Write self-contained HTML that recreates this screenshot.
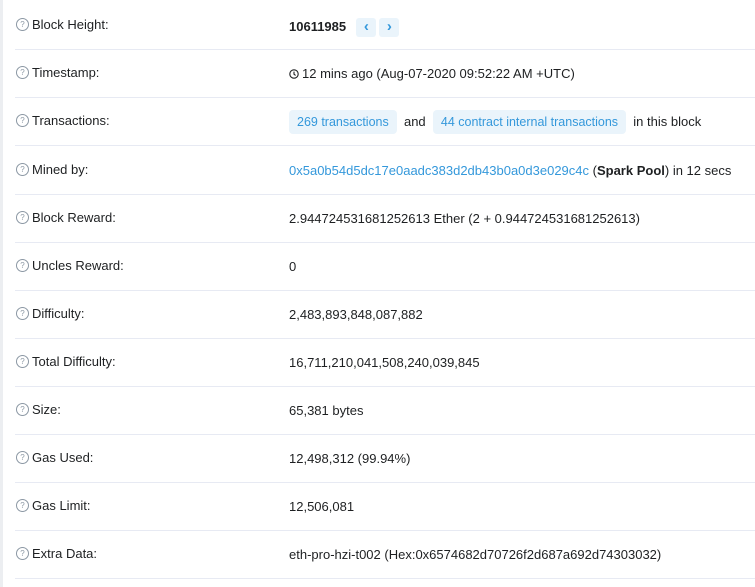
<!DOCTYPE html>
<html><head><style>
body{margin:0;width:755px;height:587px;background:#fff;font-family:"Liberation Sans",Arial,sans-serif;font-size:13px;color:#1e2022;position:relative;overflow:hidden}
.lb{position:absolute;left:0;top:0;width:3px;height:587px;background:#eceef1}
.row{position:absolute;left:15px;right:0;height:48px;border-bottom:1px solid #e7eaf3}
.l{position:absolute;left:0;top:16px;line-height:16px;color:#1e2022}
.q{position:absolute;left:1px;top:17px;width:11px;height:11px;border:1px solid #8c98a4;border-radius:50%;font-size:8px;line-height:11px;text-align:center;color:#8c98a4}
.l span.t{margin-left:17px}
.v{position:absolute;left:274px;top:16px;line-height:16px;white-space:nowrap}
a{color:#3498db;text-decoration:none}
.b{background:#eaf4fb;color:#3498db;padding:5px 8px;border-radius:4px;font-size:12.5px}
.n{display:inline-block;width:20px;height:19px;background:#eaf4fb;color:#3498db;border-radius:3px;text-align:center;line-height:18px;font-size:15px;font-weight:bold;margin-left:3px}
</style></head><body>
<div class="lb"></div>
<div class="row" style="top:1px"><span class="q">?</span><span class="l"><span class="t">Block Height:</span></span><span class="v" style="top:17px"><b>10611985</b> &nbsp;<span class="n">&#8249;</span><span class="n">&#8250;</span></span></div>
<div class="row" style="top:49px"><span class="q">?</span><span class="l"><span class="t">Timestamp:</span></span><span class="v" style="top:17px"><svg width="10" height="10" viewBox="0 0 10 10" style="vertical-align:-1px;margin-right:3px"><circle cx="5" cy="5" r="4.2" fill="none" stroke="#1e2022" stroke-width="1.1"/><path d="M5 2.6V5.2L6.6 6.4" fill="none" stroke="#1e2022" stroke-width="1.1"/></svg>12 mins ago (Aug-07-2020 09:52:22 AM +UTC)</span></div>
<div class="row" style="top:97px"><span class="q">?</span><span class="l"><span class="t">Transactions:</span></span><span class="v" style="top:17px"><span class="b">269 transactions</span> &nbsp;and &nbsp;<span class="b">44 contract internal transactions</span>&nbsp; in this block</span></div>
<div class="row" style="top:146px"><span class="q">?</span><span class="l"><span class="t">Mined by:</span></span><span class="v" style="top:17px"><a>0x5a0b54d5dc17e0aadc383d2db43b0a0d3e029c4c</a> (<b>Spark Pool</b>) in 12 secs</span></div>
<div class="row" style="top:194px"><span class="q">?</span><span class="l"><span class="t">Block Reward:</span></span><span class="v" style="top:17px">2.944724531681252613 Ether (2 + 0.944724531681252613)</span></div>
<div class="row" style="top:242px"><span class="q">?</span><span class="l"><span class="t">Uncles Reward:</span></span><span class="v" style="top:17px">0</span></div>
<div class="row" style="top:290px"><span class="q">?</span><span class="l"><span class="t">Difficulty:</span></span><span class="v" style="top:17px">2,483,893,848,087,882</span></div>
<div class="row" style="top:338px"><span class="q">?</span><span class="l"><span class="t">Total Difficulty:</span></span><span class="v" style="top:17px">16,711,210,041,508,240,039,845</span></div>
<div class="row" style="top:386px"><span class="q">?</span><span class="l"><span class="t">Size:</span></span><span class="v" style="top:17px">65,381 bytes</span></div>
<div class="row" style="top:434px"><span class="q">?</span><span class="l"><span class="t">Gas Used:</span></span><span class="v" style="top:17px">12,498,312 (99.94%)</span></div>
<div class="row" style="top:482px"><span class="q">?</span><span class="l"><span class="t">Gas Limit:</span></span><span class="v" style="top:17px">12,506,081</span></div>
<div class="row" style="top:530px"><span class="q">?</span><span class="l"><span class="t">Extra Data:</span></span><span class="v" style="top:17px">eth-pro-hzi-t002 (Hex:0x6574682d70726f2d687a692d74303032)</span></div>
</body></html>
